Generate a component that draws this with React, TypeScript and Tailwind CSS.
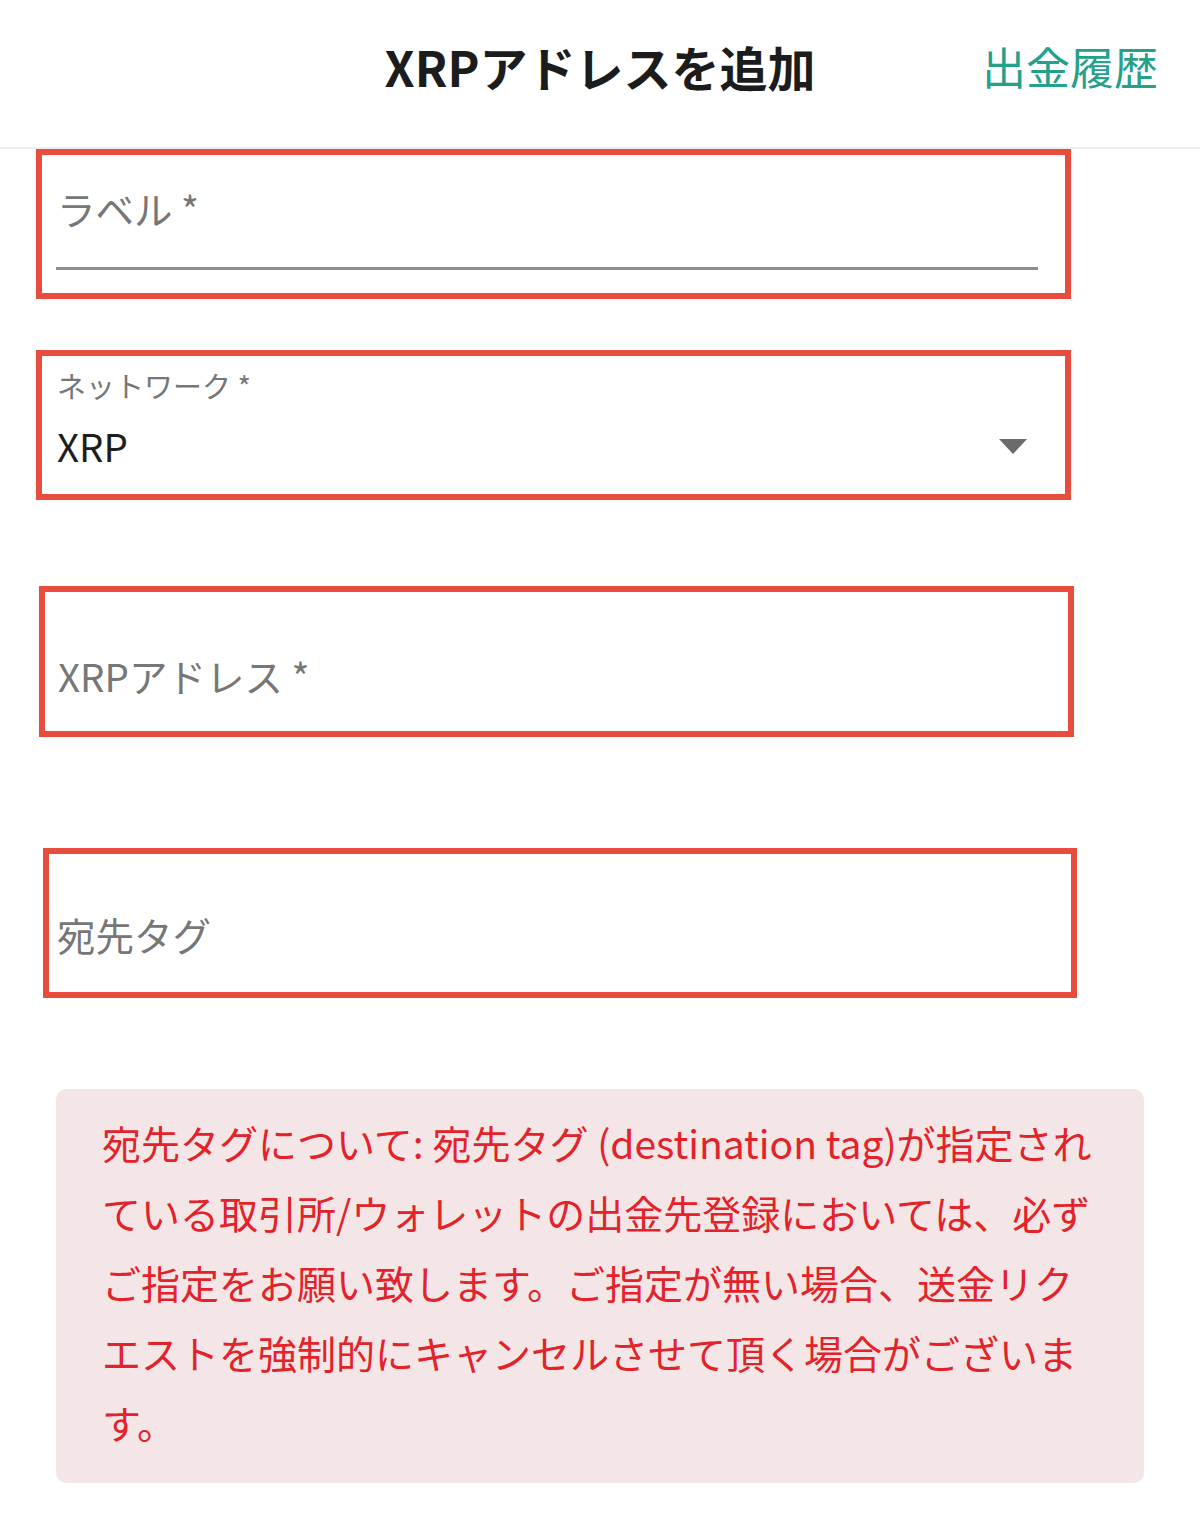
import React from "react";

export default function App() {
  const red = "border-[#e84c3d]";
  return (
    <div className="w-[1200px] min-h-[1532px] bg-white font-['Noto_Sans_CJK_JP',sans-serif]">
      <header className="grid h-[149px] grid-cols-[1fr_auto_1fr] items-center border-b-2 border-[#efefef] pb-[16px]">
        <div />
        <h1 className="text-[48px] font-bold leading-none text-[#1c1c1c]">
          XRPアドレスを追加
        </h1>
        <div className="flex justify-end pr-[42px]">
          <span className="text-[44px] leading-none text-[#25a08a]">出金履歴</span>
        </div>
      </header>

      {/* ラベル */}
      <div className={`ml-[36px] flex h-[150px] w-[1035px] flex-col border-[6px] ${red}`}>
        <div className="pl-[15px] pt-[34px] text-[38.5px] leading-none text-[#777777]">ラベル *</div>
        <div className="ml-[14px] mt-[39px] h-[3px] w-[982px] bg-[#8e8e8e]" />
      </div>

      {/* ネットワーク */}
      <div className={`ml-[36px] mt-[51px] flex h-[150px] w-[1035px] flex-col border-[6px] ${red}`}>
        <div className="pl-[15px] pt-[15px] text-[29px] leading-none text-[#777777]">ネットワーク *</div>
        <div className="flex items-center justify-between pl-[15px] pr-[38px] pt-[26px]">
          <span className="text-[38.5px] leading-none text-[#1e1e1e]">XRP</span>
          <svg width="28" height="15" viewBox="0 0 28 15" className="mt-[2px]">
            <polygon points="0,0 28,0 14,15" fill="#6b6b6b" />
          </svg>
        </div>
      </div>

      {/* XRPアドレス */}
      <div className={`ml-[39px] mt-[86px] h-[151px] w-[1035px] border-[6px] ${red}`}>
        <div className="pl-[13px] pt-[64px] text-[38.5px] leading-none text-[#777777]">XRPアドレス *</div>
      </div>

      {/* 宛先タグ */}
      <div className={`ml-[43px] mt-[111px] h-[150px] w-[1034px] border-[6px] ${red}`}>
        <div className="pl-[8px] pt-[61px] text-[38.5px] leading-none text-[#777777]">宛先タグ</div>
      </div>

      {/* Notice */}
      <div className="ml-[56px] mt-[91px] h-[394px] w-[1088px] rounded-[10px] bg-[#f4e6e7] px-[46px] pt-[18px]">
        <p className="text-[39px] leading-[70px] text-[#e3222a]">
          宛先タグについて: 宛先タグ (destination tag)が指定されている取引所/ウォレットの出金先登録においては、必ずご指定をお願い致します。ご指定が無い場合、送金リクエストを強制的にキャンセルさせて頂く場合がございます。
        </p>
      </div>
    </div>
  );
}
